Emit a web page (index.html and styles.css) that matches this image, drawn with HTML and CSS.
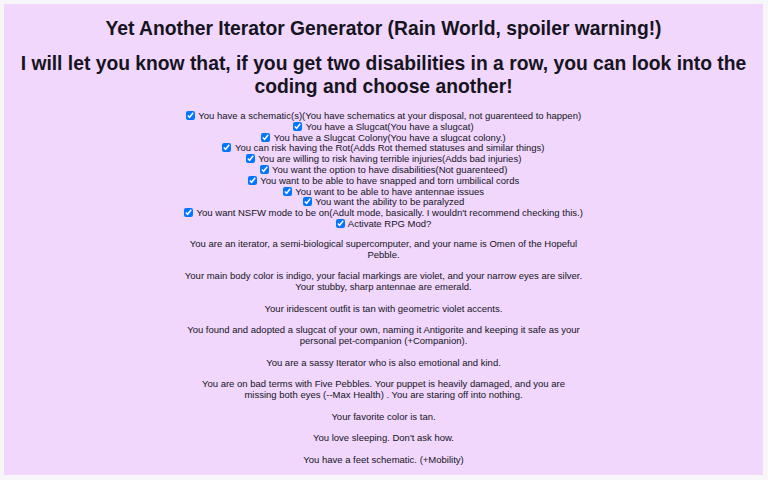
FILE: index.html
```html
<!DOCTYPE html>
<html>
<head>
<link rel="stylesheet" href="styles.css">
</head>
<body>
<div class="page">
<h1 class="title">Yet Another Iterator Generator (Rain World, spoiler warning!)</h1>
<h2 class="warning">I will let you know that, if you get two disabilities in a row, you can look into the coding and choose another!</h2>

<div class="options">
	<label><input type="checkbox" checked> You have a schematic(s)(You have schematics at your disposal, not guarenteed to happen)</label>
	<label><input type="checkbox" checked> You have a Slugcat(You have a slugcat)</label>
	<label><input type="checkbox" checked> You have a Slugcat Colony(You have a slugcat colony.)</label>
	<label><input type="checkbox" checked> You can risk having the Rot(Adds Rot themed statuses and similar things)</label>
	<label><input type="checkbox" checked> You are willing to risk having terrible injuries(Adds bad injuries)</label>
	<label><input type="checkbox" checked> You want the option to have disabilities(Not guarenteed)</label>
	<label><input type="checkbox" checked> You want to be able to have snapped and torn umbilical cords</label>
	<label><input type="checkbox" checked> You want to be able to have antennae issues</label>
	<label><input type="checkbox" checked> You want the ability to be paralyzed</label>
	<label><input type="checkbox" checked> You want NSFW mode to be on(Adult mode, basically. I wouldn't recommend checking this.)</label>
	<label><input type="checkbox" checked> Activate RPG Mod?</label>
</div>

<div class="result">
	<p>You are an iterator, a semi-biological supercomputer, and your name is Omen of the Hopeful Pebble.</p>
	<p>Your main body color is indigo, your facial markings are violet, and your narrow eyes are silver. Your stubby, sharp antennae are emerald.</p>
	<p>Your iridescent outfit is tan with geometric violet accents.</p>
	<p>You found and adopted a slugcat of your own, naming it Antigorite and keeping it safe as your personal pet-companion (+Companion).</p>
	<p>You are a sassy Iterator who is also emotional and kind.</p>
	<p>You are on bad terms with Five Pebbles. Your puppet is heavily damaged, and you are<br>missing both eyes (--Max Health) . You are staring off into nothing.</p>
	<p>Your favorite color is tan.</p>
	<p>You love sleeping. Don't ask how.</p>
	<p>You have a feet schematic. (+Mobility)</p>
</div>
</div>
</body>
</html>
```

FILE: styles.css
```css
body {
	margin: 0;
	padding: 4px 5px 5px 4px;
	background: #f7f6f8;
	font-family: "Liberation Sans", Arial, sans-serif;
	color: #16141f;
}
.page {
	background: #f0d7fb;
	height: 471px;
	text-align: center;
	padding: 0 6px;
	box-sizing: border-box;
	overflow: hidden;
}
.title {
	font-size: 19.3px;
	margin: 0;
	padding-top: 13px;
	line-height: 23px;
}
.warning {
	font-size: 19.3px;
	line-height: 23px;
	margin: 12px 0 13px;
}
.options {
	width: 403px;
	margin: 0 auto;
	font-size: 9.5px;
	line-height: 10.8px;
}
.options label {
	display: block;
}
.options input {
	width: 9px;
	height: 9px;
	margin: 0 1px 0 0;
	vertical-align: -1px;
}
.result {
	width: 403px;
	margin: 8px auto 0;
	font-size: 9.5px;
	line-height: 11px;
}
.result p {
	margin: 0 0 10.5px;
}
```
